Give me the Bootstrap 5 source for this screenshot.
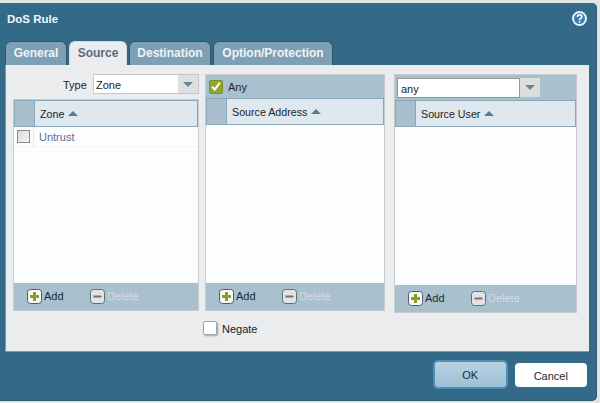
<!DOCTYPE html>
<html lang="en">
<head>
<meta charset="utf-8">
<title>DoS Rule</title>
<link rel="stylesheet" href="https://cdn.jsdelivr.net/npm/bootstrap@5.3.0/dist/css/bootstrap.min.css">
<style>
html,body{height:403px;overflow:hidden}
body{background:#e4e4e4;font-family:"Liberation Sans",sans-serif;font-size:11px;color:#222;padding-top:3px}
.dlg{width:597px;height:398px;background:#336a88;border-radius:0 5px 5px 0;padding:0 9px 0 5px;border-bottom:1px solid #2a5a75;border-right:1px solid #2a5a75}
.dlg-top{height:38px;padding:8px 0 0 2px}
.dlg-title{font-weight:700;font-size:11.5px;color:#f3f6f8;line-height:16px}
.dlg-tabs{height:24px;gap:2px}
.dlg-tab{height:24px;background:#7ea0b5;border:1px solid #2d5870;border-bottom:0;border-radius:6px 6px 0 0;color:#eef3f6;font-weight:700;font-size:12px;line-height:23px;text-align:center}
.dlg-tab.on{background:#eaecef;color:#5d6b75;border-color:#cfd6db}
.t1{width:62px}.t2{width:58px}.t3{width:82px}.t4{width:120px}
.dlg-body{width:584px;height:287px;background:#ebecee;border-left:1px solid #8e9498;border-bottom:1px solid #8e9498;padding:9px 0 0 7px}
.col-a{width:186px}.col-b{width:180px;margin-left:6px}.col-c{width:183px;margin-left:9px}
.type-row{height:20px;margin-bottom:5px;padding-left:50px}
.type-lbl{width:30px;text-align:left;padding-top:2px}
.sel-box{flex:none;height:20px;background:#fff;border:1px solid #c4c7c9;display:flex}
.sel-text{flex:1;padding-left:2px;line-height:20px}
.sel-arrow{width:20px;background:#dfe0e1;display:flex;align-items:center;justify-content:center}
.tri-d{width:0;height:0;border-left:5px solid transparent;border-right:5px solid transparent;border-top:5px solid #6e8798}
.tri-u{display:inline-block;width:0;height:0;border-left:5px solid transparent;border-right:5px solid transparent;border-bottom:5px solid #557a92;margin-left:1px;vertical-align:2px}
.grid-a{height:212px;border:1px solid #c9cccf;background:#fcfdfd}
.grid-b{height:237px;border:1px solid #c9cccf;background:#fcfdfd}
.grid-c{height:239px;border:1px solid #c9cccf;background:#fcfdfd}
.strip-b{height:23px;background:#a9c0cf;padding-left:3px;gap:5px}
.strip-c{height:25px;background:#a9c0cf;padding:3px 0 0 2px}
.hdr{height:27px;flex:none;background:#dfe8ef;border:1px solid #8aa7b9;line-height:26px}
.hdr-k{width:20px;background:#a9bfce;border-right:1px solid #8aa7b9;flex:none}
.hdr-n{padding-left:5px;font-size:10.7px}
.row-u{height:20px;border-bottom:1px solid #f2f4f5}
.cell-k{width:20px;flex:none;border-right:1px solid #e2e5e7;display:flex;align-items:center;justify-content:center}
.mini-cb{width:13px;height:13px;border:1px solid #868a8d;background:linear-gradient(135deg,#d9dadb,#f6f6f6)}
.cell-n{padding-left:5px;color:#5f6a95;line-height:20px}
.fill{flex:1}
.foot{height:27px;background:#a9c0cf;padding-left:13px}
.act{width:63px;gap:2px;display:flex;align-items:center;color:#1c2a33}
.act.off{color:#d5dce1}
.ico{width:15px;height:15px;flex:none}
.any-cb{width:14px;height:14px;background:#8ea832;border:1px solid #7d9030;border-radius:2px;flex:none}
.any-wrap{color:#223}
.any-txt{padding-top:2px}
.any-input{width:123px;height:20px;background:#fff;border:1px solid #93989b;line-height:20px;padding-left:3px}
.any-arrow{width:20px;height:19px;background:#dcdddd;display:flex;align-items:center;justify-content:center}
.neg-row{margin-top:7px;padding-left:190px;gap:5px;height:16px}
.neg-cb{width:14px;height:14px;background:#fff;border:1px solid #a0a7ac;border-radius:2px;box-shadow:1px 1px 2px #9aa2a8}
.neg-txt{padding-top:2px}
.dlg-foot{padding:8px 0 0 428px;gap:7px;align-items:center}
.b-ok{width:75px;height:29px;background:linear-gradient(#b9d2e1,#9cc0d6);border:2px solid #4f8fb3;border-radius:5px;color:#1b2a33;line-height:25px;text-align:center;padding:1px 0 0;font-size:11px}
.b-no{width:73px;height:24px;background:#fff;border:0;border-radius:4px;color:#1b2a33;line-height:24px;text-align:center;padding:1px 0 0;font-size:11px}
</style>
</head>
<body>
<div class="dlg">
  <div class="dlg-top d-flex justify-content-between">
    <div class="dlg-title">DoS Rule</div>
    <svg width="15" height="15" viewBox="0 0 15 15" class="help"><circle cx="7.5" cy="7.5" r="6.5" fill="#3a7fb0" stroke="#e8f1f6" stroke-width="2"/><path d="M5.4 6c0-3 4.4-3 4.4-.3 0 1.7-2.2 1.6-2.2 3.3" fill="none" stroke="#fff" stroke-width="1.6"/><rect x="6.8" y="10" width="1.6" height="1.6" fill="#fff"/></svg>
  </div>
  <div class="dlg-tabs d-flex">
    <div class="dlg-tab t1">General</div>
    <div class="dlg-tab t2 on">Source</div>
    <div class="dlg-tab t3">Destination</div>
    <div class="dlg-tab t4">Option/Protection</div>
  </div>
  <div class="dlg-body">
    <div class="d-flex align-items-start">
      <div class="col-a">
        <div class="type-row d-flex align-items-center">
          <span class="type-lbl">Type</span>
          <div class="sel-box fill"><span class="sel-text">Zone</span><span class="sel-arrow"><i class="tri-d"></i></span></div>
        </div>
        <div class="grid-a d-flex flex-column">
          <div class="hdr d-flex"><div class="hdr-k"></div><div class="hdr-n">Zone <i class="tri-u"></i></div></div>
          <div class="row-u d-flex"><div class="cell-k"><span class="mini-cb"></span></div><div class="cell-n">Untrust</div></div>
          <div class="fill"></div>
          <div class="foot d-flex align-items-center">
            <div class="act"><svg class="ico" viewBox="0 0 15 15"><rect x=".5" y=".5" width="14" height="14" rx="3" fill="#fbfbf4" stroke="#4d5e6a"/><path d="M7.5 3v9M3 7.500h9" stroke="#8aa02c" stroke-width="3"/></svg>Add</div>
            <div class="act off"><svg class="ico" viewBox="0 0 15 15"><rect x=".5" y=".5" width="14" height="14" rx="3" fill="#dfe4e8" stroke="#5f6f7a"/><path d="M3.500 7.500h8" stroke="#8c6a62" stroke-width="2"/></svg>Delete</div>
          </div>
        </div>
      </div>
      <div class="col-b">
        <div class="grid-b d-flex flex-column">
          <div class="strip-b d-flex align-items-center any-wrap"><span class="any-cb d-flex"><svg viewBox="0 0 14 14" width="12" height="12"><path d="M2.500 6.500l3 3.500 6-8" fill="none" stroke="#fff" stroke-width="2.400"/></svg></span><span class="any-txt">Any</span></div>
          <div class="hdr d-flex"><div class="hdr-k"></div><div class="hdr-n">Source Address <i class="tri-u"></i></div></div>
          <div class="fill"></div>
          <div class="foot d-flex align-items-center">
            <div class="act"><svg class="ico" viewBox="0 0 15 15"><rect x=".5" y=".5" width="14" height="14" rx="3" fill="#fbfbf4" stroke="#4d5e6a"/><path d="M7.5 3v9M3 7.500h9" stroke="#8aa02c" stroke-width="3"/></svg>Add</div>
            <div class="act off"><svg class="ico" viewBox="0 0 15 15"><rect x=".5" y=".5" width="14" height="14" rx="3" fill="#dfe4e8" stroke="#5f6f7a"/><path d="M3.500 7.500h8" stroke="#8c6a62" stroke-width="2"/></svg>Delete</div>
          </div>
        </div>
      </div>
      <div class="col-c">
        <div class="grid-c d-flex flex-column">
          <div class="strip-c d-flex"><div class="any-input">any</div><div class="any-arrow"><i class="tri-d"></i></div></div>
          <div class="hdr d-flex"><div class="hdr-k"></div><div class="hdr-n">Source User <i class="tri-u"></i></div></div>
          <div class="fill"></div>
          <div class="foot d-flex align-items-center">
            <div class="act"><svg class="ico" viewBox="0 0 15 15"><rect x=".5" y=".5" width="14" height="14" rx="3" fill="#fbfbf4" stroke="#4d5e6a"/><path d="M7.5 3v9M3 7.500h9" stroke="#8aa02c" stroke-width="3"/></svg>Add</div>
            <div class="act off"><svg class="ico" viewBox="0 0 15 15"><rect x=".5" y=".5" width="14" height="14" rx="3" fill="#dfe4e8" stroke="#5f6f7a"/><path d="M3.500 7.500h8" stroke="#8c6a62" stroke-width="2"/></svg>Delete</div>
          </div>
        </div>
      </div>
    </div>
    <div class="neg-row d-flex align-items-center"><span class="neg-cb"></span><span class="neg-txt">Negate</span></div>
  </div>
  <div class="dlg-foot d-flex">
    <button type="button" class="btn b-ok">OK</button>
    <button type="button" class="btn b-no">Cancel</button>
  </div>
</div>
<script src="https://cdn.jsdelivr.net/npm/bootstrap@5.3.0/dist/js/bootstrap.bundle.min.js"></script>
</body>
</html>
